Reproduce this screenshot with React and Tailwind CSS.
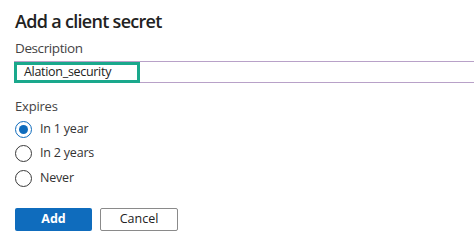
import React, { useState } from "react";

const font = { fontFamily: '"Open Sans", "Noto Sans", sans-serif' };

function Radio({ label, checked, onSelect }) {
  return (
    <label className="flex items-center gap-[8px] h-[24.5px] cursor-pointer" onClick={onSelect}>
      <span
        className={`flex items-center justify-center w-[17px] h-[17px] rounded-full border ${
          checked ? "border-[#0f6cbd]" : "border-[#3a3a3a]"
        } bg-white`}
      >
        {checked && <span className="w-[9px] h-[9px] rounded-full bg-[#0f6cbd]" />}
      </span>
      <span className="text-[12.5px] tracking-[-0.2px] text-[#333]">{label}</span>
    </label>
  );
}

export default function App() {
  const [expires, setExpires] = useState("1");
  return (
    <div className="w-[474px] h-[244px] bg-white overflow-hidden pl-[15px] pt-[9px]" style={font}>
      <h1 className="text-[18px] tracking-[-0.7px] font-semibold text-[#222] leading-[24px]">Add a client secret</h1>
      <p className="mt-[6px] text-[13.5px] tracking-[-0.4px] text-[#444] leading-[18px]">Description</p>
      <div className="relative mt-[4px] -ml-[1px]">
        <div className="h-[22px] border border-[#b8a1c8] border-r-0 flex items-center pl-[9px] text-[12.5px] tracking-[-0.3px] text-[#222]">
          Alation_security
        </div>
        <div className="absolute left-0 top-[1px] w-[126px] h-[21px] border-[3px] border-[#1aa88c]" />
      </div>
      <p className="mt-[14px] text-[13px] tracking-[-0.2px] text-[#444] leading-[18px]">Expires</p>
      <div className="flex flex-col mt-[2px]">
        <Radio label="In 1 year" checked={expires === "1"} onSelect={() => setExpires("1")} />
        <Radio label="In 2 years" checked={expires === "2"} onSelect={() => setExpires("2")} />
        <Radio label="Never" checked={expires === "n"} onSelect={() => setExpires("n")} />
      </div>
      <div className="flex gap-[8px] mt-[17px]">
        <button className="w-[77px] h-[23px] rounded-[2px] bg-[#0f6cbd] text-white text-[12.5px] font-bold">
          Add
        </button>
        <button className="w-[78px] h-[23px] rounded-[2px] border border-[#8a8a8a] bg-white text-[#222] text-[12.5px]">
          Cancel
        </button>
      </div>
    </div>
  );
}
